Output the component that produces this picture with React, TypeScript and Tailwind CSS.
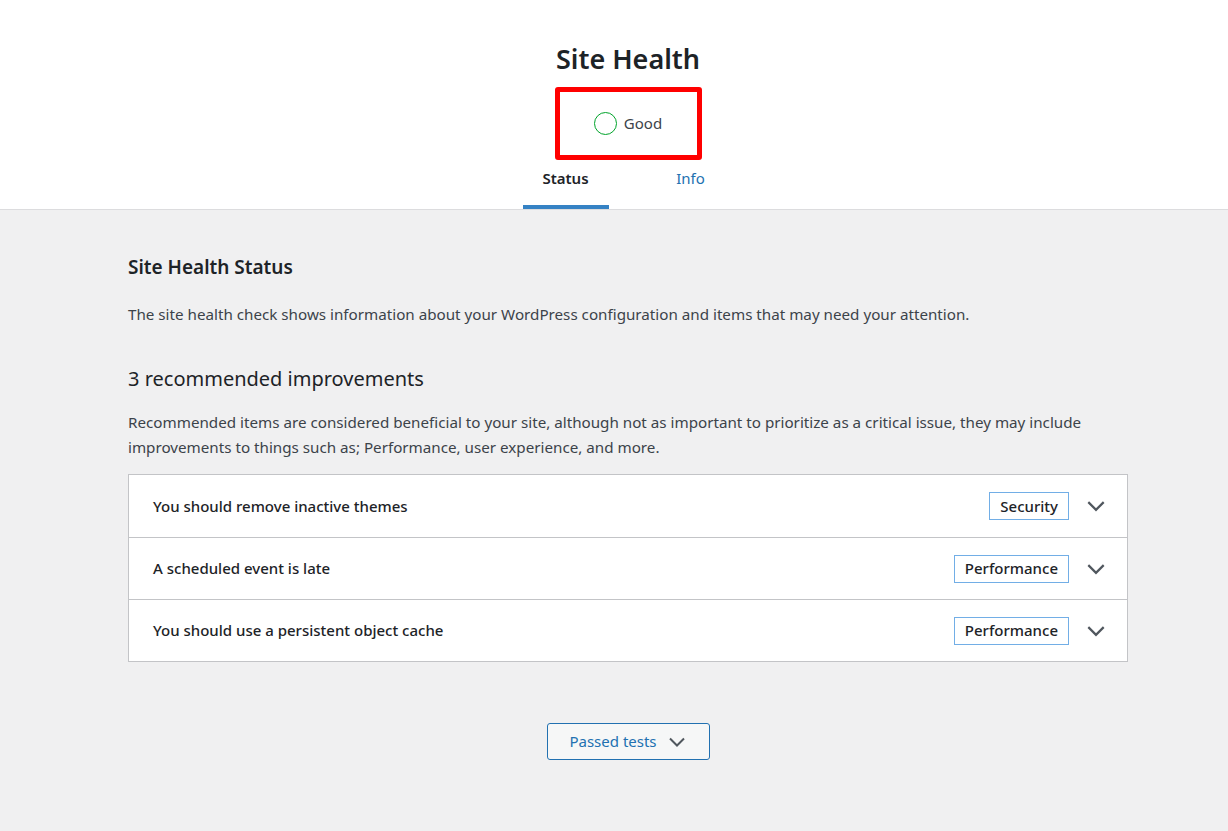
import React from 'react';

const issues = [
  { title: 'You should remove inactive themes', badge: 'Security' },
  { title: 'A scheduled event is late', badge: 'Performance' },
  { title: 'You should use a persistent object cache', badge: 'Performance' },
];

function Chevron({ className }: { className?: string }) {
  return (
    <svg viewBox="0 0 20 20" className={className} fill="none" stroke="currentColor" strokeWidth="2">
      <path d="M3 6.5l7 7 7-7" />
    </svg>
  );
}

export default function App() {
  return (
    <div className="min-h-screen bg-[#f0f0f1] text-[#3c434a] font-['Noto_Sans',sans-serif] pl-[28px]">
      {/* Header */}
      <div className="bg-white border-b border-[#dcdcde] flex flex-col items-center -ml-[28px] pl-[28px]">
        <h1 className="mt-[39px] text-[27px] leading-[40px] font-semibold text-[#1d2327]">Site Health</h1>
        <div className="mt-[8px] w-[147px] h-[73px] border-[5px] border-[#ff0000] rounded-[3px] flex items-center justify-center gap-[7px]">
          <span className="w-[23px] h-[23px] rounded-full border-[1.5px] border-[#00a32a]" />
          <span className="text-[15px] text-[#3c434a]">Good</span>
        </div>
        <div className="flex gap-[39px] mt-[2px]">
          <div className="w-[86px] h-[47px] border-b-4 border-[#3582c4] flex items-start justify-center pt-[5px] text-[15px] font-semibold text-[#1d2327]">
            Status
          </div>
          <div className="w-[86px] h-[47px] flex items-start justify-center pt-[5px] text-[15px] text-[#2271b1]">
            Info
          </div>
        </div>
      </div>

      {/* Body */}
      <div className="w-[1000px] mx-auto pt-[43px] pb-[70px]">
        <h2 className="text-[19px] font-semibold text-[#1d2327] leading-[28px]">Site Health Status</h2>
        <p className="mt-[22px] text-[15.2px] leading-[22px]">
          The site health check shows information about your WordPress configuration and items that may need your attention.
        </p>
        <h3 className="mt-[40px] text-[20px] leading-[28px] text-[#1d2327]">3 recommended improvements</h3>
        <p className="mt-[17px] text-[15.2px] leading-[25px]">
          Recommended items are considered beneficial to your site, although not as important to prioritize as a critical issue, they may include improvements to things such as; Performance, user experience, and more.
        </p>

        <div className="mt-[14px] bg-white border border-[#c3c4c7]">
          {issues.map((it, i) => (
            <div
              key={it.title}
              className={`h-[62px] flex items-center pl-[24px] pr-[20px] ${i > 0 ? 'border-t border-[#c3c4c7]' : ''}`}
            >
              <span className="flex-1 text-[15px] font-medium text-[#1d2327]">{it.title}</span>
              <span className="h-[28px] px-[10px] flex items-center border border-[#72aee6] text-[15px] font-medium text-[#1d2327]">
                {it.badge}
              </span>
              <Chevron className="ml-[16px] w-[22px] h-[22px] text-[#50575e]" />
            </div>
          ))}
        </div>

        <div className="flex justify-center mt-[61px]">
          <button className="h-[37px] w-[163px] rounded-[3px] border border-[#2271b1] bg-[#f6f7f7] flex items-center justify-center gap-[10px] text-[15px] text-[#2271b1]">
            Passed tests
            <Chevron className="w-[20px] h-[20px] text-[#50575e]" />
          </button>
        </div>
      </div>
    </div>
  );
}
